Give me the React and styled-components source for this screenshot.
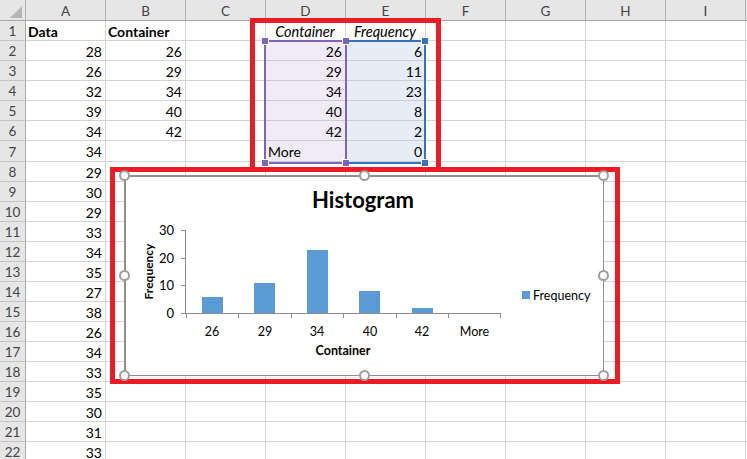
import React from 'react';
import styled, { createGlobalStyle } from 'styled-components';

const GlobalStyle = createGlobalStyle`
  html, body {
    margin: 0;
    height: 459px;
    overflow: hidden;
    background: #fff;
  }
`;

const Sheet = styled.div`
  position: relative;
  width: 747px;
  height: 459px;
  overflow: hidden;
  font-family: Lato, "Liberation Sans", sans-serif;
  font-size: 14px;
  color: #000;
`;

const Grid = styled.div`
  display: grid;
  grid-template-columns: 26px repeat(9, 80px) 41px;
  grid-template-rows: 21px repeat(5, 20px) 20px 21px repeat(15, 20px);
`;

const Corner = styled.div`
  position: relative;
  background: #e6e6e6;
  border-right: 1px solid #b4b4b4;
  border-bottom: 1px solid #a8a8a8;
  box-sizing: border-box;
  &::after {
    content: '';
    position: absolute;
    left: 10px;
    top: 6px;
    border-style: solid;
    border-width: 0 0 12px 12px;
    border-color: transparent transparent #b5b5b5 transparent;
  }
`;

const ColHead = styled.div`
  display: flex;
  align-items: center;
  justify-content: center;
  box-sizing: border-box;
  padding-top: 1px;
  background: #e6e6e6;
  border-right: 1px solid #b4b4b4;
  border-bottom: 1px solid #a8a8a8;
  color: #444;
  font-size: 13.5px;
`;

const RowHead = styled.div`
  display: flex;
  align-items: center;
  justify-content: center;
  box-sizing: border-box;
  padding-top: 1px;
  background: #e6e6e6;
  border-right: 1px solid #a8a8a8;
  border-bottom: 1px solid #c4c4c4;
  color: #444;
  font-size: 13.5px;
`;

const Cell = styled.div`
  display: flex;
  align-items: center;
  justify-content: ${p => (p.$align === 'left' ? 'flex-start' : p.$align === 'center' ? 'center' : 'flex-end')};
  box-sizing: border-box;
  padding: 1px 3px 0 2px;
  background: ${p => p.$tint || '#fff'};
  border-right: 1px solid ${p => (p.$tint ? '#c8ccd4' : '#d4d4d4')};
  border-bottom: 1px solid ${p => (p.$tint ? '#c8ccd4' : '#d4d4d4')};
  font-weight: ${p => (p.$bold ? 700 : 400)};
  font-style: ${p => (p.$italic ? 'italic' : 'normal')};
  font-size: ${p => (p.$italic ? '14.6px' : '14px')};
  white-space: nowrap;
`;

// red annotation frames drawn over the sheet
const RedBox = styled.div`
  position: absolute;
  box-sizing: border-box;
  border: 5px solid #ed1c24;
  left: ${p => p.$x}px;
  top: ${p => p.$y}px;
  width: ${p => p.$w}px;
  height: ${p => p.$h}px;
`;

// coloured range markers of the selected chart data
const RangeMarker = styled.div`
  position: absolute;
  left: 264px;
  top: 40px;
  width: 162px;
  height: 124px;
  display: grid;
  grid-template-columns: 83px 79px;
`;

const RangeColumn = styled.div`
  position: relative;
  box-sizing: border-box;
  border: 2px solid ${p => p.$color};
  ${p => p.$second && 'border-left: none;'}
`;

const RangeDot = styled.div`
  position: absolute;
  width: 6px;
  height: 6px;
  background: ${p => p.$color};
  outline: 1px solid #fff;
  ${p => (p.$bottom ? 'bottom: -4px;' : 'top: -4px;')}
  ${p => (p.$right ? 'right: -4px;' : 'left: -4px;')}
`;

const ChartBox = styled.div`
  position: absolute;
  box-sizing: border-box;
  left: 124px;
  top: 175px;
  width: 480px;
  height: 201px;
  background: #fff;
  border: 1px solid #8e8e8e;
  border-top-width: 2px;
  border-left-width: 2px;
`;

const ChartSvg = styled.svg`
  display: block;
  width: 100%;
  height: 100%;
  font-family: Lato, "Liberation Sans", sans-serif;
  fill: #000;
`;

const HandleLayer = styled.div`
  position: absolute;
  inset: -7px -6px -6px -7px;
  display: grid;
  grid-template-columns: repeat(3, 11px);
  grid-template-rows: repeat(3, 11px);
  justify-content: space-between;
  align-content: space-between;
`;

const Handle = styled.div`
  box-sizing: border-box;
  border-radius: 50%;
  background: #fff;
  border: 2px solid #9e9e9e;
  visibility: ${p => (p.$hidden ? 'hidden' : 'visible')};
`;

const cols = ['A', 'B', 'C', 'D', 'E', 'F', 'G', 'H', 'I', ''];
const dataA = [28, 26, 32, 39, 34, 34, 29, 30, 29, 33, 34, 35, 27, 38, 26, 34, 33, 35, 30, 31, 33];
const containerB = [26, 29, 34, 40, 42];
const binsD = ['26', '29', '34', '40', '42', 'More'];
const freqE = [6, 11, 23, 8, 2, 0];

const PURPLE = '#8064b8';
const BLUE = '#3a70c0';

const cellFor = (col, row) => {
  if (row === 1) {
    if (col === 'A') return { text: 'Data', $bold: true, $align: 'left' };
    if (col === 'B') return { text: 'Container', $bold: true, $align: 'left' };
    if (col === 'D') return { text: 'Container', $italic: true, $align: 'center' };
    if (col === 'E') return { text: 'Frequency', $italic: true, $align: 'center' };
    return {};
  }
  if (col === 'A') return { text: dataA[row - 2] };
  if (col === 'B') return { text: containerB[row - 2] };
  if (row <= 7 && col === 'D') {
    const text = binsD[row - 2];
    return { text, $tint: '#f0ebf6', $align: text === 'More' ? 'left' : 'right' };
  }
  if (row <= 7 && col === 'E') return { text: freqE[row - 2], $tint: '#e6edf7' };
  return {};
};

const bars = [
  { x: 202, top: 297 },
  { x: 254, top: 283 },
  { x: 307, top: 250 },
  { x: 359, top: 291 },
  { x: 412, top: 308 },
];
const xLabels = [
  { t: '26', x: 212 },
  { t: '29', x: 265 },
  { t: '34', x: 317 },
  { t: '40', x: 370 },
  { t: '42', x: 422 },
  { t: 'More', x: 474.5 },
];
const xTicks = [186, 238, 291, 343, 396, 448, 500];
const yTicks = [
  { t: '30', y: 230 },
  { t: '20', y: 258 },
  { t: '10', y: 285 },
  { t: '0', y: 313 },
];

const Histogram = () => (
  <ChartBox>
    <ChartSvg viewBox="126 177 477 198" preserveAspectRatio="xMinYMin meet">
      <text x="363" y="207.5" fontSize="22" fontWeight="700" textAnchor="middle">Histogram</text>
      {bars.map(b => (
        <rect key={b.x} x={b.x} y={b.top} width="21" height={313 - b.top} fill="#5b9bd5" />
      ))}
      <path d="M185.5 230V313.5H500.5" fill="none" stroke="#8c8c8c" />
      {yTicks.map(t => (
        <g key={t.t}>
          <line x1="181" x2="186" y1={t.y + 0.5} y2={t.y + 0.5} stroke="#8c8c8c" />
          <text x="174" y={t.y + 4.5} fontSize="13" textAnchor="end">{t.t}</text>
        </g>
      ))}
      {xTicks.map(x => (
        <line key={x} x1={x + 0.5} x2={x + 0.5} y1="313" y2="318" stroke="#8c8c8c" />
      ))}
      {xLabels.map(l => (
        <text key={l.t} x={l.x} y="336" fontSize="12.5" textAnchor="middle">{l.t}</text>
      ))}
      <text x="343" y="355" fontSize="12.5" fontWeight="700" textAnchor="middle">Container</text>
      <text transform="translate(153 271.5) rotate(-90)" fontSize="12" fontWeight="700" textAnchor="middle">Frequency</text>
      <rect x="522" y="291" width="8" height="8" fill="#5b9bd5" />
      <text x="533" y="300" fontSize="12.5">Frequency</text>
    </ChartSvg>
    <HandleLayer>
      {[0, 1, 2, 3, 4, 5, 6, 7, 8].map(i => <Handle key={i} $hidden={i === 4} />)}
    </HandleLayer>
  </ChartBox>
);

export default function App() {
  const rows = Array.from({ length: 22 }, (_, i) => i + 1);
  return (
    <Sheet>
      <GlobalStyle />
      <Grid>
        <Corner />
        {cols.map((c, i) => <ColHead key={i}>{c}</ColHead>)}
        {rows.map(r => (
          <React.Fragment key={r}>
            <RowHead>{r}</RowHead>
            {cols.map((c, i) => {
              const { text, ...rest } = cellFor(c, r);
              return <Cell key={i} {...rest}>{text}</Cell>;
            })}
          </React.Fragment>
        ))}
      </Grid>

      <RangeMarker>
        <RangeColumn $color={PURPLE}>
          <RangeDot $color={PURPLE} />
          <RangeDot $color={PURPLE} $bottom />
          <RangeDot $color={PURPLE} $right />
          <RangeDot $color={PURPLE} $right $bottom />
        </RangeColumn>
        <RangeColumn $color={BLUE} $second>
          <RangeDot $color={BLUE} $right />
          <RangeDot $color={BLUE} $right $bottom />
        </RangeColumn>
      </RangeMarker>

      <RedBox $x={250} $y={18} $w={191} $h={154} />
      <RedBox $x={110} $y={167} $w={510} $h={217} />

      <Histogram />
    </Sheet>
  );
}
